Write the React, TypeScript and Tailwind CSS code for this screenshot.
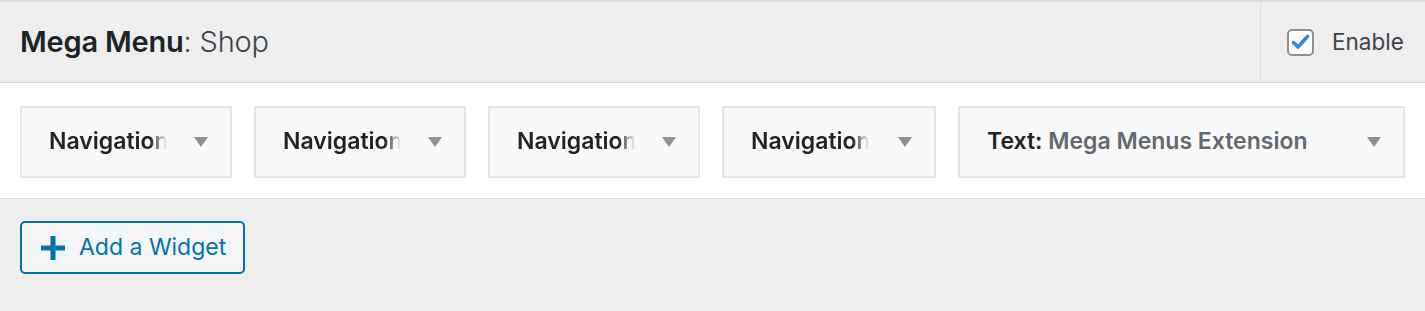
import React from 'react';

const widgets = [
  { label: 'Navigation', width: 'w-[212px]' },
  { label: 'Navigation', width: 'w-[212px]' },
  { label: 'Navigation', width: 'w-[212px]' },
  { label: 'Navigation', width: 'w-[214px]' },
];

export default function App() {
  return (
    <div className="w-[1425px] h-[311px] bg-[#eeeeee] font-['Inter',sans-serif] overflow-hidden">
      {/* Header */}
      <div className="h-[83px] border-t-2 border-b border-[#dcdcde] flex">
        <div className="flex-1 flex items-center pl-5">
          <h2 className="text-[29px] text-[#1d2327] tracking-[-0.2px]">
            <span className="font-semibold">Mega Menu</span>
            <span className="font-light text-[#3c434a]">: Shop</span>
          </h2>
        </div>
        <div className="w-[165px] border-l border-[#dcdcde] flex items-center pl-[26px] gap-[18px]">
          <Checkbox />
          <span className="text-[22.5px] text-[#3c434a]">Enable</span>
        </div>
      </div>

      {/* Widgets */}
      <div className="h-[116px] bg-white border-b border-[#dcdcde] flex items-center gap-[22px] px-5 pt-[2px]">
        {widgets.map((w, i) => (
          <div
            key={i}
            className={`${w.width} h-[72px] bg-[#f9f9f9] border-2 border-[#e6e6e6] flex items-center justify-between pl-[27px] pr-[22px]`}
          >
            <span className="w-[118px] overflow-hidden whitespace-nowrap text-[23px] font-semibold text-[#1d2327] [mask-image:linear-gradient(to_right,black_86%,transparent_100%)]">
              {w.label}
            </span>
            <Arrow />
          </div>
        ))}
        <div className="flex-1 h-[72px] bg-[#f9f9f9] border-2 border-[#e6e6e6] flex items-center justify-between pl-[27px] pr-[22px]">
          <span className="text-[23px] font-semibold text-[#1d2327] whitespace-nowrap">
            Text: <span className="text-[#646970]">Mega Menus Extension</span>
          </span>
          <Arrow />
        </div>
      </div>

      {/* Add widget */}
      <div className="px-5 pt-[22px]">
        <button className="h-[53px] w-[225px] rounded-[5px] border-2 border-[#0073aa] bg-[#f3f5f6] flex items-center pl-[19px] gap-[14px] text-[#0073aa]">
          <svg width="24" height="24" viewBox="0 0 24 24">
            <rect x="9.5" y="0" width="5" height="24" fill="#0073aa" />
            <rect x="0" y="9.5" width="24" height="5" fill="#0073aa" />
          </svg>
          <span className="text-[23px]">Add a Widget</span>
        </button>
      </div>
    </div>
  );
}

function Arrow() {
  return (
    <svg width="14" height="10" viewBox="0 0 14 10" className="shrink-0">
      <polygon points="0,0 14,0 7,10" fill="#8c8f94" />
    </svg>
  );
}

function Checkbox() {
  return (
    <div className="w-[27px] h-[27px] rounded-[5px] border-2 border-[#8c8f94] bg-white flex items-center justify-center">
      <svg width="19" height="16" viewBox="0 0 19 16">
        <path d="M2.5 8.5 L7 13 L16.5 2.5" stroke="#2e8ccf" strokeWidth="3.6" fill="none" strokeLinecap="round" strokeLinejoin="round" />
      </svg>
    </div>
  );
}
